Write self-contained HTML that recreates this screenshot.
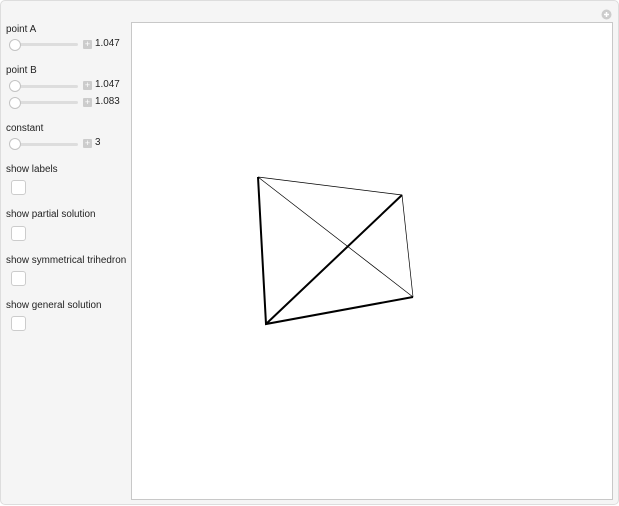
<!DOCTYPE html>
<html><head><style>
body{margin:0;width:619px;height:506px;background:#fff;font-family:"Liberation Sans",sans-serif;font-size:9.9px;color:#222;position:relative;overflow:hidden}
.panel{position:absolute;left:0;top:0;width:617px;height:503px;background:#f5f5f5;border:1px solid #ddd;border-radius:5px}
.plot{position:absolute;left:131px;top:22px;width:480px;height:476px;background:#fff;border:1px solid #c8c8c8}
.lbl{position:absolute;left:6px}
.track{position:absolute;left:12px;width:66px;height:3px;background:#ddd;border-radius:2px}
.knob{position:absolute;left:9px;width:10px;height:10px;border-radius:50%;background:#fff;border:1px solid #c4c4c4}
.plus{position:absolute;left:83px;width:9px;height:9px;background:#ccc;border-radius:1px;color:#fff;font-size:9px;line-height:9px;text-align:center}
.val{position:absolute;left:95px}
.cb{position:absolute;left:11px;width:13px;height:13px;border:1px solid #ccc;border-radius:3px;background:#fff}
</style></head><body>
<div class="panel"></div>
<svg style="position:absolute;left:601px;top:9px" width="11" height="11"><circle cx="5.5" cy="5.5" r="5" fill="#ccc"/><path d="M5.5 3v5M3 5.5h5" stroke="#fff" stroke-width="1.5"/></svg>
<div class="lbl" style="top:24px">point A</div>
<div class="track" style="top:43px"></div><div class="knob" style="top:39px"></div><div class="plus" style="top:40px">+</div><div class="val" style="top:38px">1.047</div>
<div class="lbl" style="top:65px">point B</div>
<div class="track" style="top:85px"></div><div class="knob" style="top:80px"></div><div class="plus" style="top:81px">+</div><div class="val" style="top:79px">1.047</div>
<div class="track" style="top:101px"></div><div class="knob" style="top:97px"></div><div class="plus" style="top:98px">+</div><div class="val" style="top:96px">1.083</div>
<div class="lbl" style="top:123px">constant</div>
<div class="track" style="top:143px"></div><div class="knob" style="top:138px"></div><div class="plus" style="top:139px">+</div><div class="val" style="top:137px">3</div>
<div class="lbl" style="top:164px">show labels</div><div class="cb" style="top:180px"></div>
<div class="lbl" style="top:209px">show partial solution</div><div class="cb" style="top:226px"></div>
<div class="lbl" style="top:255px">show symmetrical trihedron</div><div class="cb" style="top:271px"></div>
<div class="lbl" style="top:300px">show general solution</div><div class="cb" style="top:316px"></div>
<div class="plot"></div>
<svg style="position:absolute;left:0;top:0" width="619" height="506">
<g stroke="#000" fill="none">
<path d="M258 177L402 195L413 297M258 177L413 297" stroke-width="0.7"/>
<path d="M258 177L266 324L413 297M266 324L402 195" stroke-width="2"/>
</g></svg>
</body></html>
